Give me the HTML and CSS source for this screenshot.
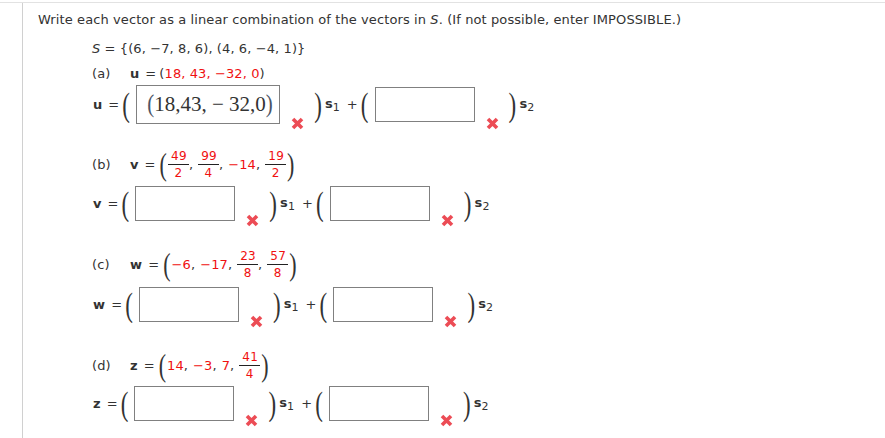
FILE: index.html
```html
<!DOCTYPE html>
<html>
<head>
<meta charset="utf-8">
<link rel="stylesheet" href="styles.css">
</head>
<body>
<div class="topline"></div>
<div class="panel">
  <p class="intro">Write each vector as a linear combination of the vectors in <i>S</i>. (If not possible, enter IMPOSSIBLE.)</p>
  <div class="block">
    <div class="line set"><i>S</i> = {(6, −7, 8, 6), (4, 6, −4, 1)}</div>

    <div class="line given ga"><span class="part">(a)</span><b>u</b><span class="eq">=</span>(<span class="red">18, 43, −32, 0</span>)</div>
    <div class="row ra">
      <b class="lab">u</b><span class="eq">=</span><span class="bp">(</span>
      <span class="box big"><span class="mj"><span class="mp">(</span>18,43, − 32,0<span class="mp">)</span></span></span>
      <svg class="xm" viewBox="0 0 13 13"><path d="M2 2 L11 11 M11 2 L2 11"/></svg>
      <span class="bp cl">)</span><span class="s">s<sub>1</sub></span><span class="plus">+</span><span class="bp">(</span>
      <span class="box small"></span>
      <svg class="xm" viewBox="0 0 13 13"><path d="M2 2 L11 11 M11 2 L2 11"/></svg>
      <span class="bp cl">)</span><span class="s">s<sub>2</sub></span>
    </div>

    <div class="line given gb"><span class="part">(b)</span><b>v</b><span class="eq">=</span><span class="vp">(</span><span class="fr"><span class="num">49</span><span class="den">2</span></span><span class="cm">,</span><span class="fr"><span class="num">99</span><span class="den">4</span></span><span class="cm">,</span><span class="red">−14</span><span class="cm">,</span><span class="fr"><span class="num">19</span><span class="den">2</span></span><span class="vp">)</span></div>
    <div class="row rb">
      <b class="lab">v</b><span class="eq">=</span><span class="bp">(</span>
      <span class="box small"></span>
      <svg class="xm" viewBox="0 0 13 13"><path d="M2 2 L11 11 M11 2 L2 11"/></svg>
      <span class="bp cl">)</span><span class="s">s<sub>1</sub></span><span class="plus">+</span><span class="bp">(</span>
      <span class="box small"></span>
      <svg class="xm" viewBox="0 0 13 13"><path d="M2 2 L11 11 M11 2 L2 11"/></svg>
      <span class="bp cl">)</span><span class="s">s<sub>2</sub></span>
    </div>

    <div class="line given gc"><span class="part">(c)</span><b>w</b><span class="eq">=</span><span class="vp">(</span><span class="red">−6</span><span class="cm">,</span><span class="red">−17</span><span class="cm">,</span><span class="fr"><span class="num">23</span><span class="den">8</span></span><span class="cm">,</span><span class="fr"><span class="num">57</span><span class="den">8</span></span><span class="vp">)</span></div>
    <div class="row rc">
      <b class="lab">w</b><span class="eq">=</span><span class="bp">(</span>
      <span class="box small"></span>
      <svg class="xm" viewBox="0 0 13 13"><path d="M2 2 L11 11 M11 2 L2 11"/></svg>
      <span class="bp cl">)</span><span class="s">s<sub>1</sub></span><span class="plus">+</span><span class="bp">(</span>
      <span class="box small"></span>
      <svg class="xm" viewBox="0 0 13 13"><path d="M2 2 L11 11 M11 2 L2 11"/></svg>
      <span class="bp cl">)</span><span class="s">s<sub>2</sub></span>
    </div>

    <div class="line given gd"><span class="part">(d)</span><b>z</b><span class="eq">=</span><span class="vp">(</span><span class="red">14</span><span class="cm">,</span><span class="red">−3</span><span class="cm">,</span><span class="red">7</span><span class="cm">,</span><span class="fr"><span class="num">41</span><span class="den">4</span></span><span class="vp">)</span></div>
    <div class="row rd">
      <b class="lab">z</b><span class="eq">=</span><span class="bp">(</span>
      <span class="box small"></span>
      <svg class="xm" viewBox="0 0 13 13"><path d="M2 2 L11 11 M11 2 L2 11"/></svg>
      <span class="bp cl">)</span><span class="s">s<sub>1</sub></span><span class="plus">+</span><span class="bp">(</span>
      <span class="box small"></span>
      <svg class="xm" viewBox="0 0 13 13"><path d="M2 2 L11 11 M11 2 L2 11"/></svg>
      <span class="bp cl">)</span><span class="s">s<sub>2</sub></span>
    </div>
  </div>
</div>
</body>
</html>
```

FILE: styles.css
```css
html, body {
  margin: 0;
  padding: 0;
  background: #fff;
}
body {
  font-family: "DejaVu Sans", Verdana, sans-serif;
  font-size: 13px;
  letter-spacing: 0.1px;
  color: #333;
}
.topline {
  height: 2px;
  border-bottom: 1px solid #e2e2e2;
}
.panel {
  margin-left: 22px;
  border-left: 1px solid #d0d0d0;
  padding: 9px 0 20px 15px;
  min-height: 420px;
  box-sizing: border-box;
}
.intro {
  margin: 0;
  line-height: 16px;
}
.block {
  margin-left: 54px;
}
.line {
  display: flex;
  align-items: center;
  white-space: pre;
}
.set {
  margin-top: 13px;
  line-height: 16px;
}
.ga {
  margin-top: 9px;
  line-height: 16px;
}
.part {
  width: 38px;
}
.eq {
  margin: 0 4px 0 6px;
}
.given .eq {
  margin-right: 3px;
}
.red {
  color: #f01010;
}
.cm {
  margin-right: 5px;
}
.vp {
  font-family: "Liberation Serif", serif;
  font-size: 22px;
  display: inline-block;
  transform: scaleY(1.45);
  margin: 0 1px;
  color: #333;
}
.fr {
  display: inline-flex;
  flex-direction: column;
  align-items: center;
  color: #f01010;
  font-size: 12px;
  letter-spacing: 0.3px;
}
.num {
  border-bottom: 1px solid #222;
  padding: 0 2px 1px 3px;
  line-height: 14px;
}
.den {
  line-height: 14px;
  padding-top: 1px;
}
.gb { margin-top: 25px; }
.gc { margin-top: 28px; }
.gd { margin-top: 28px; }

.row {
  display: flex;
  align-items: center;
}
.ra { margin-top: 3px; }
.rb { margin-top: 6px; }
.rc { margin-top: 7px; }
.rd { margin-top: 5px; }
.lab {
  margin-left: 1px;
}
.row .eq {
  margin-right: 3px;
}
.bp {
  font-family: "Liberation Serif", serif;
  font-size: 23px;
  display: inline-block;
  transform: scaleY(1.5);
  margin: 0 6px 0 0;
  color: #333;
}
.bp.cl {
  margin: 0 3px 0 10px;
}
.box {
  display: inline-flex;
  align-items: center;
  border: 1px solid #808080;
  box-sizing: border-box;
  background: #fff;
}
.box.big {
  width: 144px;
  height: 39px;
}
.box.small {
  width: 100px;
  height: 35px;
}
.mj {
  font-family: "Liberation Serif", serif;
  font-size: 21px;
  letter-spacing: 0;
  color: #333;
  padding-left: 10px;
  white-space: pre;
}
.mp {
  display: inline-block;
  transform: scaleY(1.2);
  color: #4c5566;
}
.xm {
  width: 13px;
  height: 13px;
  align-self: flex-end;
  margin: 0 0 -6px 11px;
  fill: none;
  stroke: #ec4c55;
  stroke-width: 3.6;
}
.s {
  font-weight: bold;
  white-space: nowrap;
}
.s sub {
  font-weight: normal;
  font-size: 11px;
  vertical-align: -3px;
}
.plus {
  margin: 0 3px 0 7px;
}
```
